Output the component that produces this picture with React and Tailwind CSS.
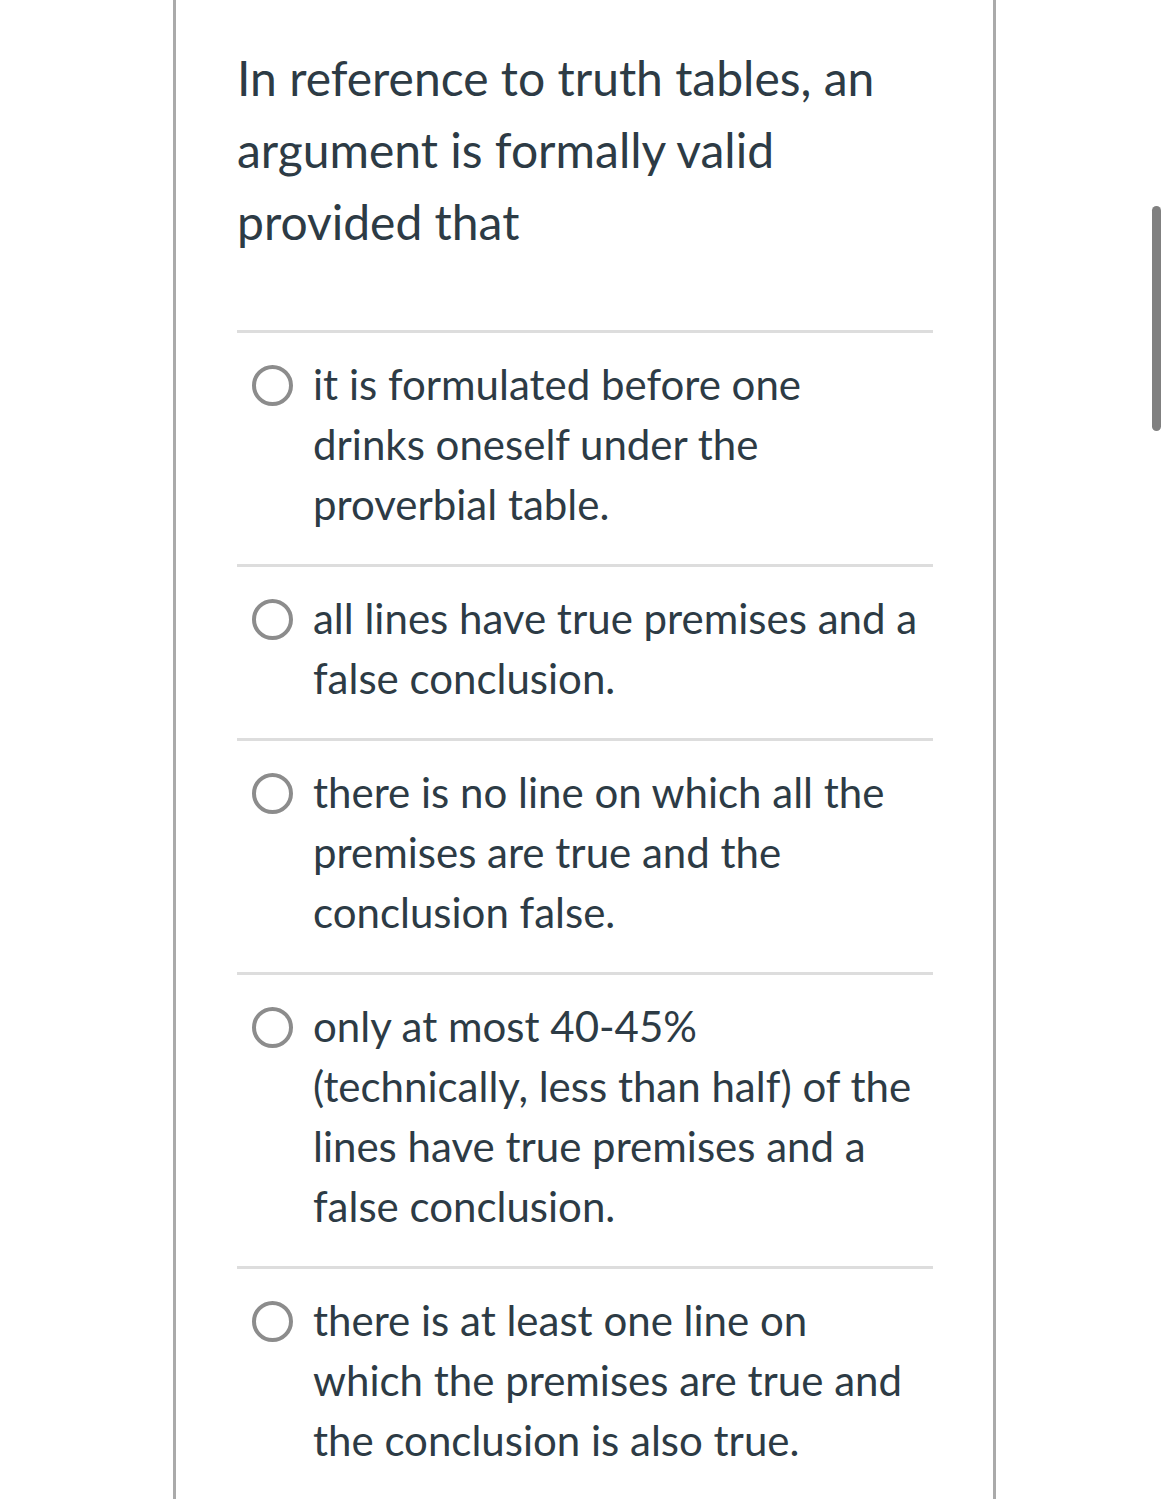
import React from "react";

const options = [
  ["it is formulated before one", "drinks oneself under the", "proverbial table."],
  ["all lines have true premises and a", "false conclusion."],
  ["there is no line on which all the", "premises are true and the", "conclusion false."],
  ["only at most 40-45%", "(technically, less than half) of the", "lines have true premises and a", "false conclusion."],
  ["there is at least one line on", "which the premises are true and", "the conclusion is also true."],
];

export default function App() {
  return (
    <div
      className="relative h-[1499px] w-[1170px] overflow-hidden bg-white text-[#2d3b45]"
      style={{ fontFamily: "Lato, 'Open Sans', sans-serif" }}
    >
      <div className="ml-[173px] h-full w-[823px] border-x-[3px] border-[#aaaaaa] pl-[61px] pr-[60px] pt-[42px]">
        <div className="text-[48px] leading-[72px]">
          In reference to truth tables, an
          <br />
          argument is formally valid
          <br />
          provided that
        </div>
        <div className="mt-[72px]">
          {options.map((lines, i) => (
            <div key={i} className="border-t-[3px] border-[#dddddd] pt-[21px] pb-[30px]">
              <div className="flex items-start">
                <span className="ml-[15px] mt-[11px] h-[41px] w-[41px] shrink-0 rounded-full border-[4px] border-[#8c8c8c]" />
                <div className="ml-[20px] text-[42px] leading-[60px]">
                  {lines.map((l, j) => (
                    <React.Fragment key={j}>
                      {l}
                      {j < lines.length - 1 && <br />}
                    </React.Fragment>
                  ))}
                </div>
              </div>
            </div>
          ))}
        </div>
      </div>
      <div className="absolute left-[1152px] top-[206px] h-[225px] w-[9px] rounded-full bg-[#808080]" />
    </div>
  );
}
